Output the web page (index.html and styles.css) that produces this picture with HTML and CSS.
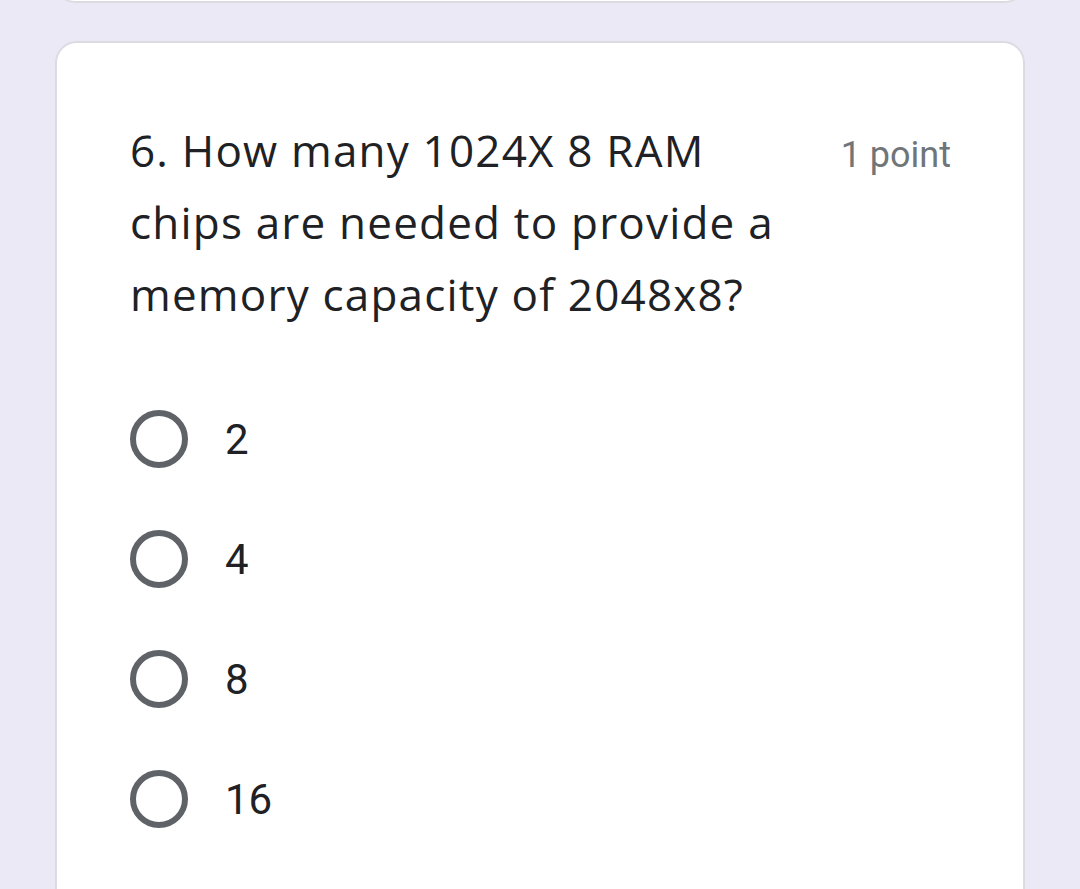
FILE: index.html
```html
<!DOCTYPE html>
<html lang="en">
<head>
<meta charset="utf-8">
<title>Question 6</title>
<link rel="stylesheet" href="styles.css">
</head>
<body>
<div class="page">
  <div class="card card-prev"></div>
  <div class="card card-question">
    <div class="question-head">
      <div class="question-title">6. How many 1024X 8 RAM chips are needed to provide a memory capacity of 2048x8?</div>
      <div class="question-points">1 point</div>
    </div>
    <div class="options">
      <label class="option"><span class="radio"></span><span class="option-text">2</span></label>
      <label class="option"><span class="radio"></span><span class="option-text">4</span></label>
      <label class="option"><span class="radio"></span><span class="option-text">8</span></label>
      <label class="option"><span class="radio"></span><span class="option-text">16</span></label>
    </div>
  </div>
</div>
</body>
</html>
```
FILE: styles.css
```css
html, body {
  margin: 0;
  padding: 0;
  height: 100%;
  overflow: hidden;
}
body {
  background: #ece9f7;
  font-family: Roboto, "Noto Sans", sans-serif;
}
.page {
  display: flex;
  flex-direction: column;
  padding: 0 55px;
}
.card {
  background: #ffffff;
  border: 2px solid #dcdbe2;
  border-radius: 22px;
  box-sizing: border-box;
}
.card-prev {
  height: 40px;
  margin-top: -37px;
}
.card-question {
  margin-top: 38px;
  padding: 71px 72px 60px 73px;
  height: 900px;
}
.question-head {
  display: flex;
  align-items: baseline;
  justify-content: space-between;
}
.question-title {
  width: 665px;
  font-family: "Open Sans", sans-serif;
  font-size: 44px;
  line-height: 72px;
  letter-spacing: 1.2px;
  color: #202124;
}
.question-points {
  font-family: Roboto, sans-serif;
  font-size: 36px;
  line-height: 72px;
  color: #70757a;
}
.options {
  margin-top: 49px;
  display: flex;
  flex-direction: column;
}
.option {
  height: 120px;
  display: flex;
  align-items: center;
  gap: 37px;
}
.radio {
  width: 58px;
  height: 58px;
  box-sizing: border-box;
  border: 6px solid #5f6368;
  border-radius: 50%;
  flex: none;
}
.option-text {
  font-family: Roboto, sans-serif;
  font-size: 42px;
  color: #202124;
}
```
